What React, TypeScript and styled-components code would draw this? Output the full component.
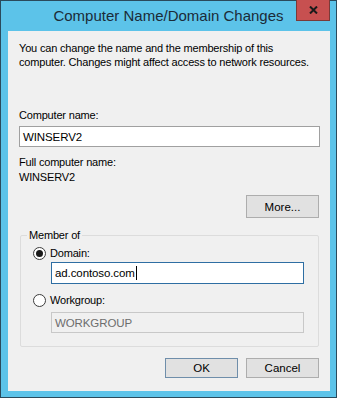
import React from "react";
import styled, { createGlobalStyle } from "styled-components";

const Global = createGlobalStyle`
  html, body { margin: 0; padding: 0; background: #fff; }
  * { box-sizing: border-box; }
`;

const Window = styled.div`
  width: 337px;
  height: 398px;
  background: #5cc3e9;
  border: 1px solid #2a4a5c;
  display: flex;
  flex-direction: column;
  font-family: "Liberation Sans", Arial, sans-serif;
  font-size: 11px;
  letter-spacing: -0.18px;
  color: #000;
`;

const TitleBar = styled.div`
  position: relative;
  height: 30px;
  display: flex;
  align-items: center;
  justify-content: center;
`;

const Title = styled.div`
  font-size: 15px;
  letter-spacing: 0;
  color: #1b2b38;
  margin-top: -1px;
`;

const CloseButton = styled.div`
  position: absolute;
  top: -1px;
  right: 6px;
  width: 34px;
  height: 21px;
  background: #c75050;
  border: 1px solid #7a3a38;
  border-top: none;
  display: flex;
  align-items: center;
  justify-content: center;
`;

const Client = styled.div`
  flex: 1;
  margin: 0 6px 6px 7px;
  background: #f0f0f0;
  padding: 10px 10px 0 11px;
  display: flex;
  flex-direction: column;
`;

const Intro = styled.p`
  margin: 0;
  line-height: 14px;
`;

const Label = styled.div<{ $top?: number }>`
  margin-top: ${(p) => p.$top ?? 0}px;
  line-height: 15px;
`;

const TextInput = styled.div<{ $focused?: boolean; $disabled?: boolean; $top?: number; $h?: number }>`
  margin-top: ${(p) => p.$top ?? 0}px;
  height: ${(p) => p.$h ?? 21}px;
  border: 1px solid ${(p) => (p.$focused ? "#2e6ea3" : p.$disabled ? "#c8c8c8" : "#a0a0a0")};
  background: ${(p) => (p.$disabled ? "#f0f0f0" : "#fff")};
  color: ${(p) => (p.$disabled ? "#6d6d6d" : "#000")};
  display: flex;
  align-items: center;
  padding-left: 3px;
  font-size: 11.5px;
  letter-spacing: -0.1px;
`;

const Caret = styled.span`
  display: inline-block;
  width: 1px;
  height: 14px;
  background: #000;
  margin-left: 1px;
`;

const ButtonRow = styled.div<{ $top: number }>`
  display: flex;
  justify-content: flex-end;
  gap: 8px;
  margin-top: ${(p) => p.$top}px;
  padding-right: 1px;
`;

const Button = styled.div<{ $default?: boolean; $h?: number }>`
  width: 73px;
  height: ${(p) => p.$h ?? 23}px;
  background: #e1e1e1;
  border: 1px solid ${(p) => (p.$default ? "#6f8eaa" : "#adadad")};
  display: flex;
  align-items: center;
  justify-content: center;
  font-size: 11.5px;
  letter-spacing: 0;
`;

const Group = styled.fieldset`
  margin: 10px 0 0 1px;
  width: 299px;
  height: 119px;
  border: 1px solid #dcdcdc;
  border-radius: 2px;
  padding: 4px 14px 0 12px;
  display: flex;
  flex-direction: column;
`;

const Legend = styled.legend`
  padding: 0 2px;
  margin-left: -6px;
  line-height: 14px;
`;

const RadioRow = styled.div<{ $top: number }>`
  display: flex;
  align-items: center;
  gap: 4px;
  margin-top: ${(p) => p.$top}px;
  line-height: 14px;
`;

const RadioCircle = styled.span<{ $checked?: boolean }>`
  width: 13px;
  height: 13px;
  border-radius: 50%;
  border: 1px solid #3c3c3c;
  background: #fff;
  display: flex;
  align-items: center;
  justify-content: center;
  &::after {
    content: "";
    width: 7px;
    height: 7px;
    border-radius: 50%;
    background: ${(p) => (p.$checked ? "#1a1a1a" : "transparent")};
  }
`;

const Indented = styled.div`
  margin-left: 18px;
  display: flex;
  flex-direction: column;
`;

export default function App() {
  return (
    <>
      <Global />
      <Window>
        <TitleBar>
          <Title>Computer Name/Domain Changes</Title>
          <CloseButton>
            <svg width="9" height="8" viewBox="0 0 9 8">
              <path d="M1 0.5 L8 7.5 M8 0.5 L1 7.5" stroke="#1a1a1a" strokeWidth="2" />
            </svg>
          </CloseButton>
        </TitleBar>
        <Client>
          <Intro>
            You can change the name and the membership of this
            <br />
            computer. Changes might affect access to network resources.
          </Intro>
          <Label $top={39}>Computer name:</Label>
          <TextInput $top={3}>WINSERV2</TextInput>
          <Label $top={8}>Full computer name:</Label>
          <Label>WINSERV2</Label>
          <ButtonRow $top={10}>
            <Button>More...</Button>
          </ButtonRow>
          <Group>
            <Legend>Member of</Legend>
            <RadioRow $top={0}>
              <RadioCircle $checked />
              <span>Domain:</span>
            </RadioRow>
            <Indented>
              <TextInput $focused $top={2} $h={22}>
                ad.contoso.com
                <Caret />
              </TextInput>
            </Indented>
            <RadioRow $top={9}>
              <RadioCircle />
              <span>Workgroup:</span>
            </RadioRow>
            <Indented>
              <TextInput $disabled $top={5}>WORKGROUP</TextInput>
            </Indented>
          </Group>
          <ButtonRow $top={11}>
            <Button $default $h={20}>OK</Button>
            <Button $h={20}>Cancel</Button>
          </ButtonRow>
        </Client>
      </Window>
    </>
  );
}
